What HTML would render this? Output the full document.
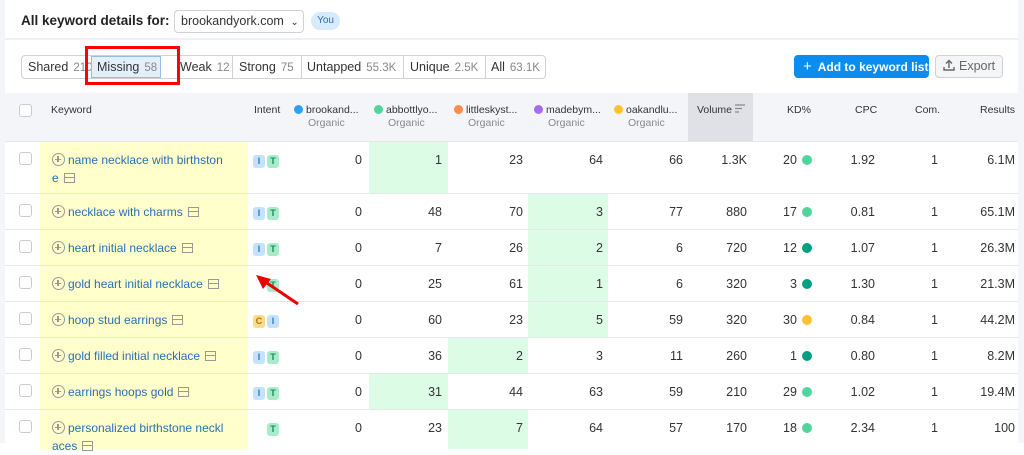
<!DOCTYPE html>
<html><head><meta charset="utf-8"><style>
*{box-sizing:border-box;margin:0;padding:0}
body{width:1024px;height:443px;overflow:hidden;background:#fff;font-family:"Liberation Sans",sans-serif;color:#333;font-size:12px;position:relative}
.a{position:absolute}
.r{position:absolute;left:5px;width:1013px;border-top:1px solid #e4e6ea}
.c{position:absolute;top:9px;line-height:18px;font-size:12.5px}
.n{text-align:right}
.cb{position:absolute;left:14px;top:10px;width:13px;height:13px;border:1px solid #c9ccd2;border-radius:3px;background:#fff}
.kw{position:absolute;left:35px;top:0;width:208px;height:100%;background:#ffffcc}
.kt{position:absolute;left:47px;top:9px;width:176px;line-height:18px;color:#2a6fb5;font-size:12px;word-break:break-all}
.pl{display:inline-block;width:13px;height:13px;border:1.5px solid #999;border-radius:50%;position:relative;vertical-align:-2px;margin-right:3px}
.pl:before{content:"";position:absolute;left:2px;top:4.5px;width:6px;height:1.5px;background:#999}
.pl:after{content:"";position:absolute;left:4.25px;top:2px;width:1.5px;height:6px;background:#999}
.sq{display:inline-block;width:11px;height:10px;border:1.3px solid #999;vertical-align:-1px;margin-left:5px;position:relative}
.sq:after{content:"";position:absolute;left:0;right:0;top:3px;height:1px;background:#999}
.g{position:absolute;top:0;height:100%;background:#dcfce6}
.b{display:inline-block;width:12px;height:13px;border-radius:3px;font-size:9px;line-height:13px;text-align:center;font-weight:bold;margin-right:2px}
.I{background:#c5e2fb;color:#2f78c4}.T{background:#a8ebcc;color:#198a58}.C{background:#fbdc8e;color:#b07400}
.dot{display:inline-block;width:10px;height:10px;border-radius:50%;margin-left:5px;vertical-align:-1px}
.hd{position:absolute;font-size:10.5px;line-height:13px;color:#333}
.hd i{font-style:normal;color:#888}
.dt{display:inline-block;width:9px;height:9px;border-radius:50%;margin-right:3px;vertical-align:-1px}
.tab{position:absolute;top:56px;height:22px;line-height:22px;font-size:12.5px;color:#333}
.tab i{font-style:normal;color:#888;margin-left:5px;font-size:11.5px}
.sep{position:absolute;top:56px;width:1px;height:22px;background:#cfd2d7}
</style></head><body>
<div class="a" style="left:0;top:0;width:5px;height:443px;background:#f4f5f9"></div>
<div class="a" style="left:1018px;top:0;width:6px;height:443px;background:#f4f5f9"></div>
<div class="a" style="left:5px;top:38px;width:1013px;height:2px;background:#eef0f3"></div>
<div class="a" style="left:21px;top:13px;font-size:13.5px;font-weight:bold;color:#222">All keyword details for:</div>
<div class="a" style="left:174px;top:10px;width:130px;height:23px;border:1px solid #cfd2d7;border-radius:4px;font-size:12.5px;line-height:21px;padding-left:6px">brookandyork.com <span style="font-size:10px;margin-left:3px">&#8964;</span></div>
<div class="a" style="left:311px;top:12px;width:29px;height:18px;border-radius:9px;background:#d6ebfd;color:#2a6fb5;font-size:10px;line-height:18px;text-align:center">You</div>
<div class="a" style="left:21px;top:55px;width:525px;height:24px;border:1px solid #cfd2d7;border-radius:4px"></div>
<div class="tab" style="left:28px">Shared<i>210</i></div>
<div class="a" style="left:91px;top:56px;width:70px;height:22px;background:#e3f0fc;border:1px solid #8fbfe9"></div>
<div class="tab" style="left:97px">Missing<i>58</i></div>
<div class="tab" style="left:180px">Weak<i>12</i></div>
<div class="sep" style="left:232px"></div>
<div class="tab" style="left:239px">Strong<i>75</i></div>
<div class="sep" style="left:301px"></div>
<div class="tab" style="left:307px">Untapped<i>55.3K</i></div>
<div class="sep" style="left:403px"></div>
<div class="tab" style="left:410px">Unique<i>2.5K</i></div>
<div class="sep" style="left:485px"></div>
<div class="tab" style="left:491px">All<i>63.1K</i></div>
<div class="a" style="left:85px;top:46px;width:95px;height:39px;border:3px solid #f00"></div>
<div class="a" style="left:794px;top:55px;width:135px;height:23px;background:#0b8cf0;border-radius:4px;color:#fff;font-size:12px;font-weight:bold;line-height:23px;padding-left:9px;white-space:nowrap"><span style="font-size:15px;font-weight:normal;margin-right:6px">+</span>Add to keyword list</div>
<div class="a" style="left:935px;top:55px;width:68px;height:23px;background:#f4f5f7;border:1px solid #cfd2d7;border-radius:4px;color:#666;font-size:12.5px;line-height:21px;padding-left:7px"><svg width="12" height="12" style="vertical-align:-1px;margin-right:4px"><path d="M6 9V1.5M3 4.5L6 1.5L9 4.5M1 8v3h10V8" stroke="#666" stroke-width="1.4" fill="none"/></svg>Export</div>
<div class="a" style="left:5px;top:93px;width:1013px;height:48px;background:#f4f5f9"></div>
<div class="a" style="left:688px;top:93px;width:65px;height:48px;background:#e0e1e6"></div>
<div class="cb" style="left:19px;top:104px"></div>
<div class="hd" style="left:51px;top:104px">Keyword</div>
<div class="hd" style="left:254px;top:104px">Intent</div>
<div class="hd" style="left:294px;top:104px"><span class="dt" style="background:#2ea0f5"></span>brookand...<br><i style="margin-left:14px">Organic</i></div>
<div class="hd" style="left:374px;top:104px"><span class="dt" style="background:#4fd69c"></span>abbottlyo...<br><i style="margin-left:14px">Organic</i></div>
<div class="hd" style="left:454px;top:104px"><span class="dt" style="background:#ff8a4c"></span>littleskyst...<br><i style="margin-left:14px">Organic</i></div>
<div class="hd" style="left:534px;top:104px"><span class="dt" style="background:#a66cf0"></span>madebym...<br><i style="margin-left:14px">Organic</i></div>
<div class="hd" style="left:614px;top:104px"><span class="dt" style="background:#ffc130"></span>oakandlu...<br><i style="margin-left:14px">Organic</i></div>
<div class="hd" style="left:697px;top:104px">Volume <svg width="10" height="9" style="vertical-align:0"><path d="M0 1h10M0 4.5h7M0 8h4" stroke="#888" stroke-width="1.2"/></svg></div>
<div class="hd" style="left:787px;top:104px">KD%</div>
<div class="hd" style="left:855px;top:104px">CPC</div>
<div class="hd" style="left:915px;top:104px">Com.</div>
<div class="hd" style="left:980px;top:104px">Results</div>

<div class="r" style="top:141px;height:52px"><div class="g" style="left:364px;width:79px"></div><div class="kw"></div><div class="cb"></div><div class="kt"><span class="pl"></span>name necklace with birthstone<span class="sq"></span></div><div class="c" style="left:248px"><span class="b I">I</span><span class="b T">T</span></div><div class="c n" style="left:300px;width:57px">0</div><div class="c n" style="left:380px;width:57px">1</div><div class="c n" style="left:461px;width:57px">23</div><div class="c n" style="left:541px;width:57px">64</div><div class="c n" style="left:621px;width:57px">66</div><div class="c n" style="left:685px;width:57px">1.3K</div><div class="c" style="left:778px">20<span class="dot" style="background:#4fd69c"></span></div><div class="c n" style="left:820px;width:50px">1.92</div><div class="c n" style="left:880px;width:53px">1</div><div class="c n" style="left:950px;width:60px">6.1M</div></div>

<div class="r" style="top:193px;height:36px"><div class="g" style="left:523px;width:80px"></div><div class="kw"></div><div class="cb"></div><div class="kt"><span class="pl"></span>necklace with charms<span class="sq"></span></div><div class="c" style="left:248px"><span class="b I">I</span><span class="b T">T</span></div><div class="c n" style="left:300px;width:57px">0</div><div class="c n" style="left:380px;width:57px">48</div><div class="c n" style="left:461px;width:57px">70</div><div class="c n" style="left:541px;width:57px">3</div><div class="c n" style="left:621px;width:57px">77</div><div class="c n" style="left:685px;width:57px">880</div><div class="c" style="left:778px">17<span class="dot" style="background:#4fd69c"></span></div><div class="c n" style="left:820px;width:50px">0.81</div><div class="c n" style="left:880px;width:53px">1</div><div class="c n" style="left:950px;width:60px">65.1M</div></div>

<div class="r" style="top:229px;height:36px"><div class="g" style="left:523px;width:80px"></div><div class="kw"></div><div class="cb"></div><div class="kt"><span class="pl"></span>heart initial necklace<span class="sq"></span></div><div class="c" style="left:248px"><span class="b I">I</span><span class="b T">T</span></div><div class="c n" style="left:300px;width:57px">0</div><div class="c n" style="left:380px;width:57px">7</div><div class="c n" style="left:461px;width:57px">26</div><div class="c n" style="left:541px;width:57px">2</div><div class="c n" style="left:621px;width:57px">6</div><div class="c n" style="left:685px;width:57px">720</div><div class="c" style="left:778px">12<span class="dot" style="background:#009f81"></span></div><div class="c n" style="left:820px;width:50px">1.07</div><div class="c n" style="left:880px;width:53px">1</div><div class="c n" style="left:950px;width:60px">26.3M</div></div>

<div class="r" style="top:265px;height:36px"><div class="g" style="left:523px;width:80px"></div><div class="kw"></div><div class="cb"></div><div class="kt"><span class="pl"></span>gold heart initial necklace<span class="sq"></span></div><div class="c" style="left:248px"><span class="b" style="background:transparent"></span><span class="b T">T</span></div><div class="c n" style="left:300px;width:57px">0</div><div class="c n" style="left:380px;width:57px">25</div><div class="c n" style="left:461px;width:57px">61</div><div class="c n" style="left:541px;width:57px">1</div><div class="c n" style="left:621px;width:57px">6</div><div class="c n" style="left:685px;width:57px">320</div><div class="c" style="left:785px">3<span class="dot" style="background:#009f81"></span></div><div class="c n" style="left:820px;width:50px">1.30</div><div class="c n" style="left:880px;width:53px">1</div><div class="c n" style="left:950px;width:60px">21.3M</div></div>

<div class="r" style="top:301px;height:36px"><div class="g" style="left:523px;width:80px"></div><div class="kw"></div><div class="cb"></div><div class="kt"><span class="pl"></span>hoop stud earrings<span class="sq"></span></div><div class="c" style="left:248px"><span class="b C">C</span><span class="b I">I</span></div><div class="c n" style="left:300px;width:57px">0</div><div class="c n" style="left:380px;width:57px">60</div><div class="c n" style="left:461px;width:57px">23</div><div class="c n" style="left:541px;width:57px">5</div><div class="c n" style="left:621px;width:57px">59</div><div class="c n" style="left:685px;width:57px">320</div><div class="c" style="left:778px">30<span class="dot" style="background:#ffc130"></span></div><div class="c n" style="left:820px;width:50px">0.84</div><div class="c n" style="left:880px;width:53px">1</div><div class="c n" style="left:950px;width:60px">44.2M</div></div>

<div class="r" style="top:337px;height:36px"><div class="g" style="left:443px;width:80px"></div><div class="kw"></div><div class="cb"></div><div class="kt"><span class="pl"></span>gold filled initial necklace<span class="sq"></span></div><div class="c" style="left:248px"><span class="b I">I</span><span class="b T">T</span></div><div class="c n" style="left:300px;width:57px">0</div><div class="c n" style="left:380px;width:57px">36</div><div class="c n" style="left:461px;width:57px">2</div><div class="c n" style="left:541px;width:57px">3</div><div class="c n" style="left:621px;width:57px">11</div><div class="c n" style="left:685px;width:57px">260</div><div class="c" style="left:785px">1<span class="dot" style="background:#009f81"></span></div><div class="c n" style="left:820px;width:50px">0.80</div><div class="c n" style="left:880px;width:53px">1</div><div class="c n" style="left:950px;width:60px">8.2M</div></div>

<div class="r" style="top:373px;height:36px"><div class="g" style="left:364px;width:79px"></div><div class="kw"></div><div class="cb"></div><div class="kt"><span class="pl"></span>earrings hoops gold<span class="sq"></span></div><div class="c" style="left:248px"><span class="b I">I</span><span class="b T">T</span></div><div class="c n" style="left:300px;width:57px">0</div><div class="c n" style="left:380px;width:57px">31</div><div class="c n" style="left:461px;width:57px">44</div><div class="c n" style="left:541px;width:57px">63</div><div class="c n" style="left:621px;width:57px">59</div><div class="c n" style="left:685px;width:57px">210</div><div class="c" style="left:778px">29<span class="dot" style="background:#4fd69c"></span></div><div class="c n" style="left:820px;width:50px">1.02</div><div class="c n" style="left:880px;width:53px">1</div><div class="c n" style="left:950px;width:60px">19.4M</div></div>

<div class="r" style="top:409px;height:40px"><div class="g" style="left:443px;width:80px"></div><div class="kw"></div><div class="cb"></div><div class="kt"><span class="pl"></span>personalized birthstone necklaces<span class="sq"></span></div><div class="c" style="left:248px"><span class="b" style="background:transparent"></span><span class="b T">T</span></div><div class="c n" style="left:300px;width:57px">0</div><div class="c n" style="left:380px;width:57px">23</div><div class="c n" style="left:461px;width:57px">7</div><div class="c n" style="left:541px;width:57px">64</div><div class="c n" style="left:621px;width:57px">57</div><div class="c n" style="left:685px;width:57px">170</div><div class="c" style="left:778px">18<span class="dot" style="background:#4fd69c"></span></div><div class="c n" style="left:820px;width:50px">2.34</div><div class="c n" style="left:880px;width:53px">1</div><div class="c n" style="left:950px;width:60px">100</div></div>

<svg class="a" style="left:250px;top:270px" width="60" height="45"><line x1="48" y1="34" x2="14" y2="11" stroke="#e00" stroke-width="3"/><polygon points="6,5 21,9 13,19" fill="#e00"/></svg>
</body></html>
